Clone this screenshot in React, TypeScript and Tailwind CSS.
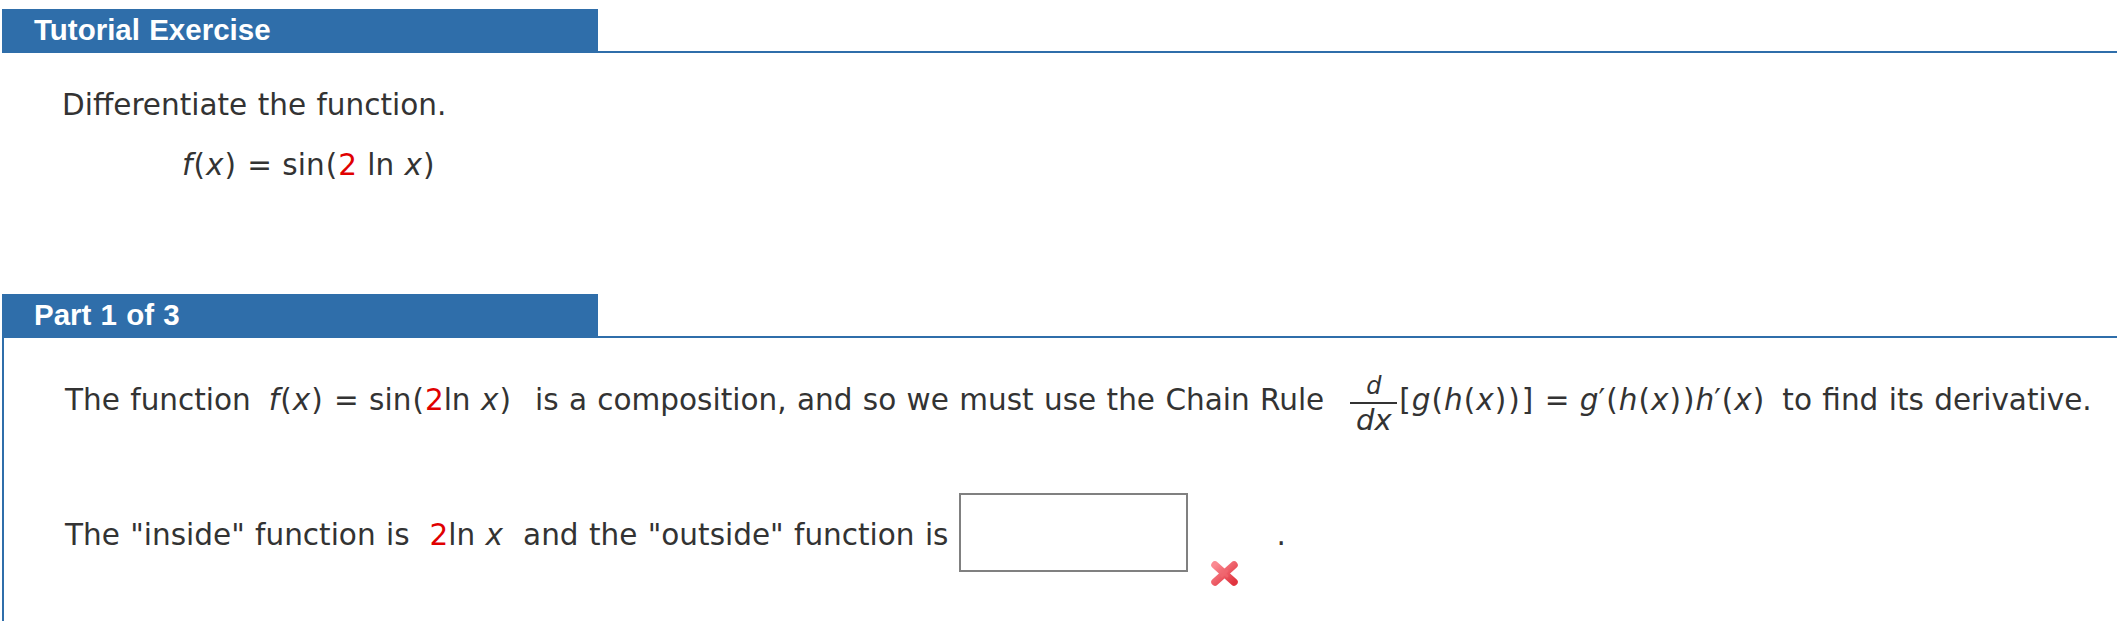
import type { ReactNode } from "react";

const BODY_FONT = "font-[Verdana,'DejaVu_Sans',sans-serif]";

function Paren({ children }: { children: ReactNode }) {
  return <span className="mx-[1px]">{children}</span>;
}

function Var({ children }: { children: ReactNode }) {
  return <span className="italic">{children}</span>;
}

function SectionHeader({ title }: { title: string }) {
  return (
    <div className="flex border-b-2 border-[#2f6eaa]">
      <div className="h-[42px] w-[596px] bg-[#2f6eaa] pl-[32px] font-['Liberation_Sans',Arial,sans-serif] text-[29.5px] font-bold leading-[42px] text-white">
        {title}
      </div>
    </div>
  );
}

function Fraction() {
  return (
    <span className="-my-[24px] mx-[1px] inline-flex flex-col items-center align-middle">
      <span className="pt-[3px] pb-[4px] text-[24px] leading-[24px] italic">d</span>
      <span className="h-[2px] w-[47px] bg-[#333333]" />
      <span className="pt-[3px] text-[29px] leading-[26px] italic">dx</span>
    </span>
  );
}

function WrongMark() {
  return (
    <svg width="31" height="29" viewBox="0 0 31 29" className="ml-[21px] inline-block align-[-43px]">
      <defs>
        <linearGradient id="wrong" x1="0" y1="0" x2="1" y2="1">
          <stop offset="0" stopColor="#fb8a92" />
          <stop offset="1" stopColor="#e0343f" />
        </linearGradient>
      </defs>
      <path
        d="M6 6 L25 23 M25 6 L6 23"
        stroke="url(#wrong)"
        strokeWidth="7.5"
        strokeLinecap="round"
        fill="none"
      />
      <path d="M13 12 L18 17 M18 12 L13 17" stroke="#f26a72" strokeWidth="3" strokeLinecap="round" opacity="0.6" />
    </svg>
  );
}

export default function App() {
  return (
    <div className={`flex min-h-screen flex-col bg-white pt-[9px] pl-[2px] text-[#333333] ${BODY_FONT} text-[29.5px] [word-spacing:1px]`}>
      <section>
        <SectionHeader title="Tutorial Exercise" />
        <div className="pt-[34px] pb-[111px]">
          <div className="pl-[60px] leading-[36px]">Differentiate the function.</div>
          <div className="mt-[24px] pl-[180px] leading-[36px]">
            <Var>f</Var>
            <Paren>(</Paren>
            <Var>x</Var>
            <Paren>)</Paren> = sin<Paren>(</Paren>
            <span className="text-[#e00000]">2</span> ln <Var>x</Var>
            <Paren>)</Paren>
          </div>
        </div>
      </section>

      <section className="flex flex-1 flex-col">
        <SectionHeader title="Part 1 of 3" />
        <div className="flex-1 border-l-2 border-[#2f6eaa] pt-[44px] pl-[61px]">
          <div className="whitespace-nowrap leading-[36px]">
            The function
            <span className="ml-[18px]">
              <Var>f</Var>
              <Paren>(</Paren>
              <Var>x</Var>
              <Paren>)</Paren> = sin<Paren>(</Paren>
              <span className="text-[#e00000]">2</span>ln <Var>x</Var>
              <Paren>)</Paren>
            </span>
            <span className="ml-[23px]">is a composition, and so we must use the Chain Rule</span>
            <span className="ml-[25px]">
              <Fraction />
            </span>
            <span>
              <Paren>[</Paren>
              <Var>g</Var>
              <Paren>(</Paren>
              <Var>h</Var>
              <Paren>(</Paren>
              <Var>x</Var>
              <Paren>)</Paren>
              <Paren>)</Paren>
              <Paren>]</Paren> = <Var>g</Var>′<Paren>(</Paren>
              <Var>h</Var>
              <Paren>(</Paren>
              <Var>x</Var>
              <Paren>)</Paren>
              <Paren>)</Paren>
              <Var>h</Var>′<Paren>(</Paren>
              <Var>x</Var>
              <Paren>)</Paren>
            </span>
            <span className="ml-[17px]">to find its derivative.</span>
          </div>

          <div className="mt-[75px] whitespace-nowrap leading-[36px]">
            The "inside" function is
            <span className="ml-[20px]">
              <span className="text-[#e00000]">2</span>ln <Var>x</Var>
            </span>
            <span className="ml-[20px]">and the "outside" function is</span>
            <span className="ml-[11px] inline-block h-[79px] w-[229px] border-2 border-[#808080] bg-white align-[-27px]" />
            <WrongMark />
            <span className="ml-[36px]">.</span>
          </div>
        </div>
      </section>
    </div>
  );
}
